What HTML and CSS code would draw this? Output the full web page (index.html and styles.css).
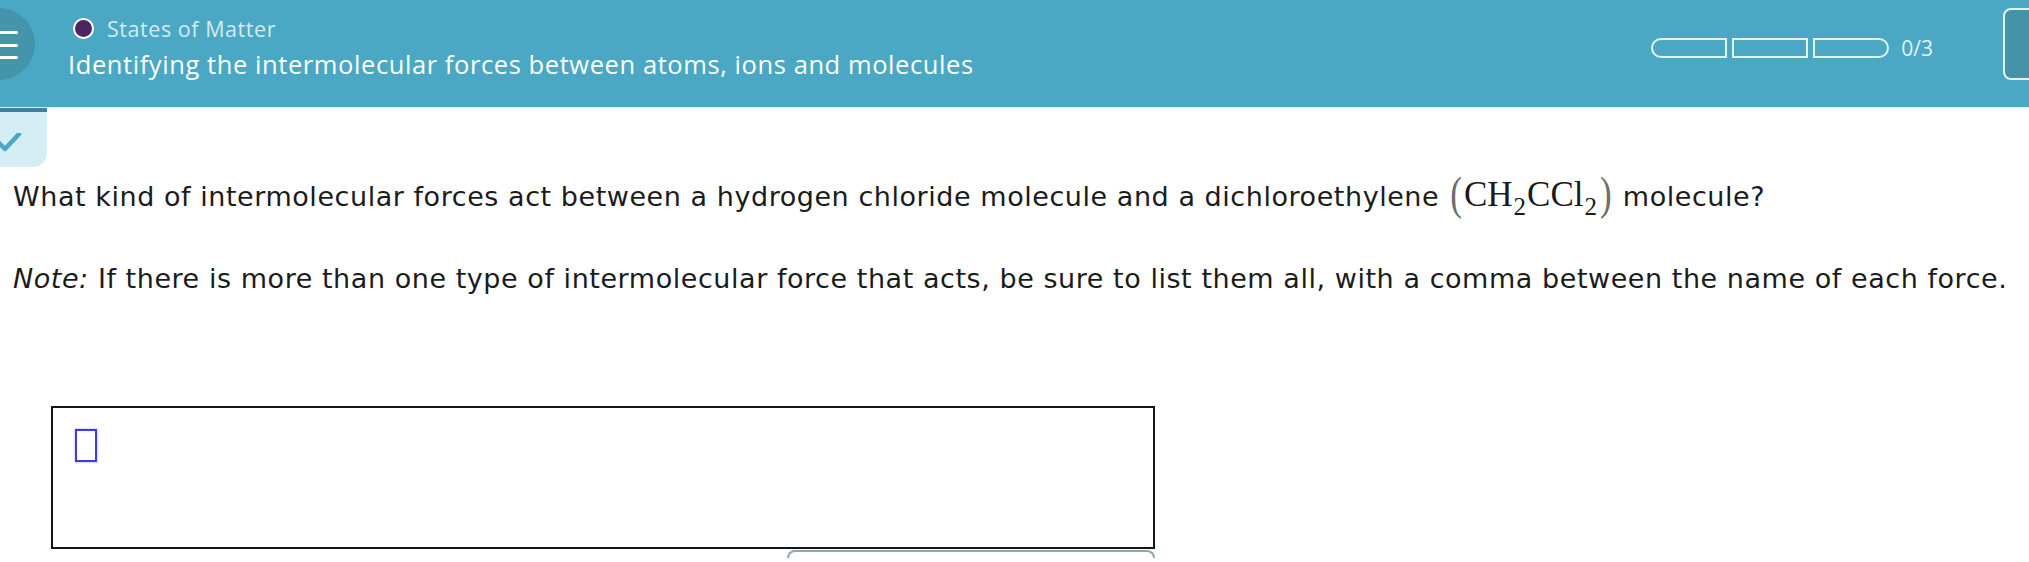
FILE: index.html
```html
<!DOCTYPE html>
<html lang="en">
<head>
<meta charset="utf-8">
<title>States of Matter</title>
<link rel="stylesheet" href="styles.css">
</head>
<body>
<header class="topbar">
  <div class="menu-btn">
    <span class="bar"></span><span class="bar"></span><span class="bar"></span>
  </div>
  <div class="titles">
    <div class="topic"><span class="dot"></span><span class="topic-name">States of Matter</span></div>
    <div class="lesson">Identifying the intermolecular forces between atoms, ions and molecules</div>
  </div>
  <div class="progress">
    <div class="seg seg-first"></div>
    <div class="seg"></div>
    <div class="seg seg-last"></div>
    <span class="count">0/3</span>
  </div>
  <div class="side-btn"></div>
</header>

<div class="check-tab">
  <svg class="check" width="24" height="24" viewBox="0 0 24 24">
    <polyline points="-3,8 5,16 19,1" fill="none" stroke="#4aa8c4" stroke-width="4.5" stroke-linecap="round" stroke-linejoin="round"/>
  </svg>
</div>

<main class="content">
  <p class="question">What kind of intermolecular forces act between a hydrogen chloride molecule and a dichloroethylene <span class="formula"><span class="paren">(</span>CH<sub>2</sub>CCl<sub>2</sub><span class="paren">)</span></span> molecule?</p>
  <p class="note"><em>Note:</em> If there is more than one type of intermolecular force that acts, be sure to list them all, with a comma between the name of each force.</p>

  <div class="answer">
    <div class="answer-box"><span class="cursor"></span></div>
    <div class="answer-actions"><div class="action-btn"></div></div>
  </div>
</main>
</body>
</html>
```

FILE: styles.css
```css
html, body {
  margin: 0;
  padding: 0;
  overflow: hidden;
  background: #ffffff;
}

body {
  font-family: "DejaVu Sans", Verdana, sans-serif;
  color: #1b1b1b;
}

/* ---------- top bar ---------- */
.topbar {
  display: flex;
  align-items: flex-start;
  box-sizing: border-box;
  height: 108px;
  background: #4aa8c4;
  border-bottom: 1px solid #d8eef4;
  overflow: hidden;
  font-family: "Open Sans", "Lato", sans-serif;
}

.menu-btn {
  flex-shrink: 0;
  width: 72px;
  height: 72px;
  margin-left: -37px;
  margin-top: 8px;
  border-radius: 50%;
  background: #4494aa;
  box-sizing: border-box;
  padding: 23px 0 0 31px;
  display: flex;
  flex-direction: column;
  gap: 9.5px;
}

.bar {
  display: block;
  width: 24px;
  height: 3px;
  border-radius: 2px;
  background: #ffffff;
}

.titles {
  margin-left: 33px;
  padding-top: 14px;
}

.topic {
  display: flex;
  align-items: center;
  height: 28px;
}

.dot {
  width: 17px;
  height: 17px;
  margin-left: 5px;
  border-radius: 50%;
  background: #4b2463;
  border: 2px solid #ffffff;
}

.topic-name {
  margin-left: 13px;
  font-size: 21.5px;
  letter-spacing: 0.55px;
  color: #d2ebf2;
}

.lesson {
  margin-top: 7px;
  font-size: 25.5px;
  letter-spacing: 0.58px;
  line-height: 30px;
  color: #ffffff;
}

.progress {
  margin-left: auto;
  margin-top: 38px;
  display: flex;
  align-items: center;
  gap: 5px;
  height: 20px;
}

.seg {
  box-sizing: border-box;
  width: 76px;
  height: 20px;
  border: 2px solid #e4f3f7;
}

.seg-first {
  border-radius: 10px 0 0 10px;
}

.seg-last {
  border-radius: 0 10px 10px 0;
}

.count {
  margin-left: 7px;
  font-size: 21px;
  color: #e2f2f7;
}

.side-btn {
  flex-shrink: 0;
  box-sizing: border-box;
  width: 44px;
  height: 72px;
  margin-top: 8px;
  margin-left: 70px;
  margin-right: -18px;
  border: 2px solid #e4f3f7;
  border-radius: 8px;
  background: #4593a9;
}

/* ---------- check tab ---------- */
.check-tab {
  box-sizing: border-box;
  width: 47px;
  height: 59px;
  border-top: 4px solid #3e8295;
  background: #d5eef4;
  border-bottom-right-radius: 14px;
  padding-top: 21px;
}

.check {
  display: block;
}

/* ---------- question ---------- */
.content {
  padding-left: 13px;
}

.question,
.note {
  margin: 0;
  font-size: 27px;
  letter-spacing: 0.55px;
  line-height: 50px;
  white-space: nowrap;
}

.question {
  margin-top: 3px;
}

.note {
  margin-top: 31px;
}

.note em {
  font-style: oblique;
}

.formula {
  font-family: "Liberation Serif", "Times New Roman", serif;
  font-size: 35px;
  letter-spacing: 0;
}

.formula sub {
  font-size: 25px;
  vertical-align: baseline;
  position: relative;
  top: 9px;
  margin: 0 1px;
}

.paren {
  display: inline-block;
  color: #6d6d6d;
  transform: scaleY(1.3);
  margin: 0 2px;
}

/* ---------- answer ---------- */
.answer {
  margin-top: 102px;
  margin-left: 38px;
  width: 1104px;
}

.answer-box {
  box-sizing: border-box;
  height: 143px;
  border: 2px solid #161616;
  padding: 21px 0 0 22px;
}

.cursor {
  display: block;
  box-sizing: border-box;
  width: 22px;
  height: 33px;
  border: 2px solid #3a3af5;
  box-shadow: 0 0 2px rgba(58, 58, 245, 0.5);
}

.answer-actions {
  display: flex;
  justify-content: flex-end;
  padding-top: 1px;
}

.action-btn {
  box-sizing: border-box;
  width: 368px;
  height: 8px;
  border: 2px solid #8ea8b3;
  border-bottom: none;
  border-radius: 14px 14px 0 0;
}
```
